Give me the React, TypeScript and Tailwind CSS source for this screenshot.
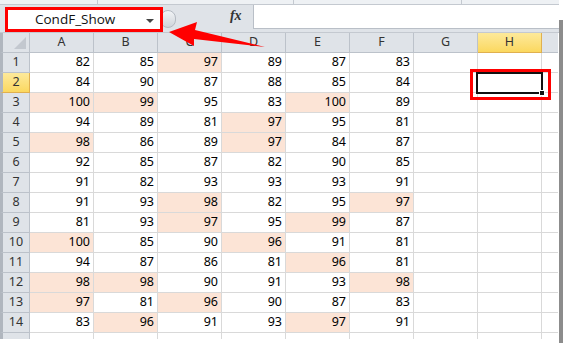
import React from 'react';

const data: number[][] = [
  [82, 85, 97, 89, 87, 83],
  [84, 90, 87, 88, 85, 84],
  [100, 99, 95, 83, 100, 89],
  [94, 89, 81, 97, 95, 81],
  [98, 86, 89, 97, 84, 87],
  [92, 85, 87, 82, 90, 85],
  [91, 82, 93, 93, 93, 91],
  [91, 93, 98, 82, 95, 97],
  [81, 93, 97, 95, 99, 87],
  [100, 85, 90, 96, 91, 81],
  [94, 87, 86, 81, 96, 81],
  [98, 98, 90, 91, 93, 98],
  [97, 81, 96, 90, 87, 83],
  [83, 96, 91, 93, 97, 91],
];

const cols = ['A', 'B', 'C', 'D', 'E', 'F', 'G', 'H'];

function ColHeader({ label, active }: { label: string; active?: boolean }) {
  return (
    <div
      className={
        active
          ? 'w-[64px] h-[20px] flex items-center justify-center border-r border-b border-[#e0b04f] bg-gradient-to-b from-[#fde99a] to-[#fbd85e] text-[#333]'
          : 'w-[64px] h-[20px] flex items-center justify-center border-r border-b border-[#bcc2ca] bg-[#dfe3e8] text-[#333]'
      }
    >
      {label}
    </div>
  );
}

export default function App() {
  return (
    <div className="relative w-[563px] h-[343px] overflow-hidden bg-white font-['Noto_Sans',sans-serif] text-[12.5px] leading-none">
      <div className="flex">
        <div className="flex flex-col w-[559px]">
          {/* ribbon edge */}
          <div className="h-[5px] flex bg-[#eef1f4] border-b border-[#c4c9d0]">
            <div className="w-[98px] border-r border-[#c4c9d0]" />
            <div className="w-[196px] border-r border-[#c4c9d0]" />
            <div className="w-[168px] border-r border-[#c4c9d0]" />
          </div>

          {/* name box + formula bar */}
          <div className="h-[28px] flex bg-[#dfe3e8] border-b border-[#c4c9d0]">
            <div className="ml-[5px] mt-[2px] w-[161px] h-[25px] border-[3px] border-[#ff0000] bg-white flex items-center relative z-10">
              <span className="pl-[27px] text-[13.5px] font-['Open_Sans',sans-serif] text-[#111]">CondF_Show</span>
              <span className="absolute right-[6px] top-[9px] w-0 h-0 border-l-[4px] border-r-[4px] border-t-[4px] border-l-transparent border-r-transparent border-t-[#444]" />
            </div>
            <div className="-ml-[3px] mt-[5px] w-[16px] h-[18px] rounded-full bg-gradient-to-b from-[#f2f4f6] to-[#cfd4da] border border-[#b4bac2]" />
            <div className="ml-[45px] mt-[4px] w-[30px] flex items-start justify-center">
              <span className="font-['Liberation_Serif',serif] italic font-bold text-[14px] text-[#333]">fx</span>
            </div>
            <div className="ml-[3px] w-[311px] h-[24px] bg-white border-l border-b border-[#b9bfc7]" />
          </div>

          {/* column header row */}
          <div className="flex">
            <div className="w-[30px] h-[20px] bg-[#dfe3e8] border-r border-b border-l-[3px] border-[#bcc2ca] border-l-[#b0b6be] flex items-end justify-end pr-[3px] pb-[3px]">
              <svg width="12" height="12" viewBox="0 0 12 12">
                <polygon points="12,0 12,12 0,12" fill="#c3c8cf" />
              </svg>
            </div>
            {cols.map((c) => (
              <ColHeader key={c} label={c} active={c === 'H'} />
            ))}
            <div className="w-[16px] h-[20px] bg-[#dfe3e8] border-b border-[#bcc2ca]" />
          </div>

          {/* data rows */}
          {data.map((row, i) => (
            <div key={i} className="flex">
              <div
                className={
                  i === 1
                    ? 'w-[30px] h-[20px] flex items-center justify-center border-r border-b border-l-[3px] border-[#e0b04f] border-l-[#b0b6be] bg-gradient-to-b from-[#fde99a] to-[#fbd85e] text-[#333]'
                    : 'w-[30px] h-[20px] flex items-center justify-center border-r border-b border-l-[3px] border-[#bcc2ca] border-l-[#b0b6be] bg-[#dfe3e8] text-[#333]'
                }
              >
                {i + 1}
              </div>
              {row.map((v, j) => (
                <div
                  key={j}
                  className={
                    v >= 96
                      ? 'w-[64px] h-[20px] flex items-center justify-end pr-[3px] border-r border-b border-[#d9d9d9] bg-[#fce4d6] text-[#000]'
                      : 'w-[64px] h-[20px] flex items-center justify-end pr-[3px] border-r border-b border-[#d9d9d9] text-[#000]'
                  }
                >
                  {v}
                </div>
              ))}
              <div className="w-[64px] h-[20px] border-r border-b border-[#d9d9d9]" />
              <div className="w-[64px] h-[20px] border-r border-b border-[#d9d9d9]" />
              <div className="w-[16px] h-[20px] border-b border-[#d9d9d9]" />
            </div>
          ))}

          {/* partial row 15 */}
          <div className="flex h-[6px]">
            <div className="w-[30px] bg-[#dfe3e8] border-r border-l-[3px] border-[#bcc2ca] border-l-[#b0b6be]" />
            {cols.map((c) => (
              <div key={c} className="w-[64px] border-r border-[#d9d9d9]" />
            ))}
          </div>
        </div>
        <div className="mt-[20px] w-[4px] h-[323px] bg-[#8c8c8c]" />
      </div>
      <div className="h-[4px] bg-gradient-to-b from-[#9a9a9a] to-[#7e7e7e]" />

      {/* selection on H2 */}
      <div className="absolute left-[476px] top-[72px] w-[67px] h-[22px] border-2 border-[#111]">
        <span className="absolute -right-[4px] -bottom-[4px] w-[6px] h-[6px] bg-[#111] border border-white" />
      </div>
      {/* red highlight box */}
      <div className="absolute left-[470px] top-[69px] w-[81px] h-[31px] border-[3px] border-[#ff0000]" />

      {/* arrow */}
      <svg className="absolute left-0 top-0 pointer-events-none" width="563" height="343" viewBox="0 0 563 343">
        <polygon points="169,32 197,22 195,30 265,47 194,39 194,46" fill="#ff0000" />
      </svg>
    </div>
  );
}
